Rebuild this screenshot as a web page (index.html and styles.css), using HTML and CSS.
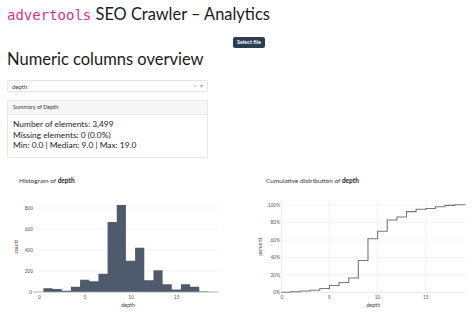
FILE: index.html
```html
<!DOCTYPE html>
<html lang="en">
<head>
<meta charset="utf-8">
<title>advertools SEO Crawler – Analytics</title>
<link rel="stylesheet" href="styles.css">
</head>
<body>
<div class="top">
  <h1 class="title"><code class="brand">advertools</code> SEO Crawler – Analytics</h1>
  <div class="toolbar"><button class="btn">Select file</button></div>
  <h2 class="section">Numeric columns overview</h2>
  <div class="select">
    <span class="select-value">depth</span>
    <span class="select-icons"><span class="clear">×</span><span class="caret">▾</span></span>
  </div>
  <div class="card">
    <div class="card-header">Summary of Depth</div>
    <div class="card-body">
      <p>Number of elements: 3,499</p>
      <p>Missing elements: 0 (0.0%)</p>
      <p>Min: 0.0 | Median: 9.0 | Max: 19.0</p>
    </div>
  </div>
</div>
<div class="charts">
  <div class="chart">
    <svg class="plot" viewBox="0 165 237 151" width="237" height="151">
      <text class="ptitle" x="19" y="183">Histogram of <tspan class="b">depth</tspan></text>
      <g class="grid">
        <line x1="35" y1="208" x2="218" y2="208"/>
        <line x1="35" y1="229" x2="218" y2="229"/>
        <line x1="35" y1="250" x2="218" y2="250"/>
        <line x1="35" y1="271" x2="218" y2="271"/>
      </g>
      <path class="bars" d="M43.4 292 V288.3 H52.57 V289 H61.74 V290.7 H70.91 V286.7 H80.08 V279.7 H89.25 V281.3 H98.42 V273.7 H107.59 V221.9 H116.76 V205 H125.93 V260.7 H135.1 V247.8 H144.27 V280.3 H153.44 V270.3 H162.61 V284.2 H171.78 V289.5 H180.95 V284.2 H190.12 V286.8 H199.29 V291.5 H208.46 V292 Z"/>
      <line class="zero" x1="33.5" y1="292" x2="218" y2="292"/>
      <g class="tick ytick">
        <text x="33" y="209.8">800</text>
        <text x="33" y="230.8">600</text>
        <text x="33" y="251.8">400</text>
        <text x="33" y="272.8">200</text>
        <text x="32" y="293.8">0</text>
      </g>
      <g class="tick xtick">
        <text x="39.3" y="299">0</text>
        <text x="85" y="299">5</text>
        <text x="131" y="299">10</text>
        <text x="176.7" y="299">15</text>
      </g>
      <text class="axis" x="128" y="307">depth</text>
      <text class="axis" transform="translate(18 246.7) rotate(-90)">count</text>
    </svg>
  </div>
  <div class="chart">
    <svg class="plot" viewBox="237 165 237 151" width="237" height="151">
      <text class="ptitle" x="266" y="183">Cumulative distribution of <tspan class="b">depth</tspan></text>
      <g class="grid">
        <line x1="281.3" y1="205" x2="465.3" y2="205"/>
        <line x1="281.3" y1="222.3" x2="465.3" y2="222.3"/>
        <line x1="281.3" y1="240" x2="465.3" y2="240"/>
        <line x1="281.3" y1="257.3" x2="465.3" y2="257.3"/>
        <line x1="281.3" y1="274.7" x2="465.3" y2="274.7"/>
        <line x1="329.45" y1="200" x2="329.45" y2="292.3"/>
        <line x1="377.6" y1="200" x2="377.6" y2="292.3"/>
        <line x1="425.75" y1="200" x2="425.75" y2="292.3"/>
      </g>
      <g class="zeros">
        <line x1="281.3" y1="292.3" x2="465.3" y2="292.3"/>
        <line x1="281.3" y1="200" x2="281.3" y2="292.3"/>
      </g>
      <path class="ecdf" d="M281.3 292.3 H290.93 V291.7 H300.56 V291 H310.19 V290.3 H319.82 V288.5 H329.45 V285.5 H339.08 V282.5 H348.71 V278 H358.34 V260.5 H367.97 V238.8 H377.6 V231.2 H387.23 V220 H396.86 V217 H406.49 V211.6 H416.12 V209.3 H425.75 V208.5 H435.38 V206.8 H445.01 V205.4 H454.64 V204.8 H465.3"/>
      <g class="tick ytick">
        <text x="280" y="206.8">100%</text>
        <text x="280" y="224.1">80%</text>
        <text x="280" y="241.8">60%</text>
        <text x="280" y="259.1">40%</text>
        <text x="280" y="276.5">20%</text>
        <text x="280" y="294.1">0%</text>
      </g>
      <g class="tick xtick">
        <text x="282" y="299">0</text>
        <text x="329.45" y="299">5</text>
        <text x="377.6" y="299">10</text>
        <text x="425.75" y="299">15</text>
      </g>
      <text class="axis" x="373.3" y="307">depth</text>
      <text class="axis" transform="translate(262 246.7) rotate(-90)">percent</text>
    </svg>
  </div>
</div>
</body>
</html>
```

FILE: styles.css
```css
* { box-sizing: border-box; }
html, body { margin: 0; padding: 0; background: #fff; }
body {
  font-family: Lato, "Open Sans", "Liberation Sans", sans-serif;
  color: #212529;
  width: 474px;
  height: 316px;
  overflow: hidden;
}
.top { padding: 0 7px; }
.title {
  margin: 4px 0 0;
  font-size: 16.4px;
  line-height: 20px;
  font-weight: 400;
  color: #1a1a1a;
}
.brand {
  font-family: "DejaVu Sans Mono", "Liberation Mono", monospace;
  font-size: 14px;
  color: #d63384;
}
.toolbar {
  display: flex;
  padding-left: 226px;
  margin-top: 12px;
}
.btn {
  height: 11px;
  padding: 0 4px;
  border: 0;
  border-radius: 2px;
  background: #2c3e50;
  color: #fff;
  font-family: Lato, sans-serif;
  font-size: 5.5px;
  font-weight: 700;
  line-height: 11px;
}
.section {
  margin: 1px 0 0;
  font-size: 16.5px;
  line-height: 20px;
  font-weight: 400;
  color: #1a1a1a;
}
.select {
  margin-top: 11px;
  width: 201px;
  height: 12px;
  border: 1px solid #e6e6e6;
  border-radius: 2px;
  display: flex;
  align-items: center;
  justify-content: space-between;
  padding: 0 4px;
  font-size: 6px;
  color: #333;
}
.select-icons { display: flex; gap: 3px; color: #aaa; font-size: 5.5px; }
.card {
  margin-top: 8px;
  width: 201px;
  border: 1px solid #e8e8e8;
  border-radius: 2px;
}
.card-header {
  height: 14px;
  background: #f7f7f7;
  border-bottom: 1px solid #ececec;
  font-size: 5.5px;
  line-height: 13px;
  padding: 0 5px;
  color: #333;
}
.card-body { padding: 4px 5px 6px; }
.card-body p {
  margin: 0;
  font-size: 8.4px;
  line-height: 10.5px;
  color: #222;
}
.charts { display: flex; margin-top: 7px; }
.chart { width: 237px; height: 151px; }
.plot { display: block; }
.ptitle { font-size: 6.5px; fill: #333; font-family: Lato, sans-serif; }
.ptitle .b { font-weight: 700; fill: #222; }
.grid line { stroke: #efefef; stroke-width: 0.8; }
.zeros line { stroke: #e2e2e2; stroke-width: 0.8; }
.bars { fill: #505a6d; }
.zero { stroke: #a0a0a0; stroke-width: 0.8; }
.ecdf { fill: none; stroke: #777; stroke-width: 1.1; }
.tick text { font-size: 4.8px; fill: #555; font-family: Lato, sans-serif; }
.ytick text { text-anchor: end; }
.xtick text { text-anchor: middle; }
.axis { font-size: 5.5px; fill: #444; font-family: Lato, sans-serif; text-anchor: middle; }
```
